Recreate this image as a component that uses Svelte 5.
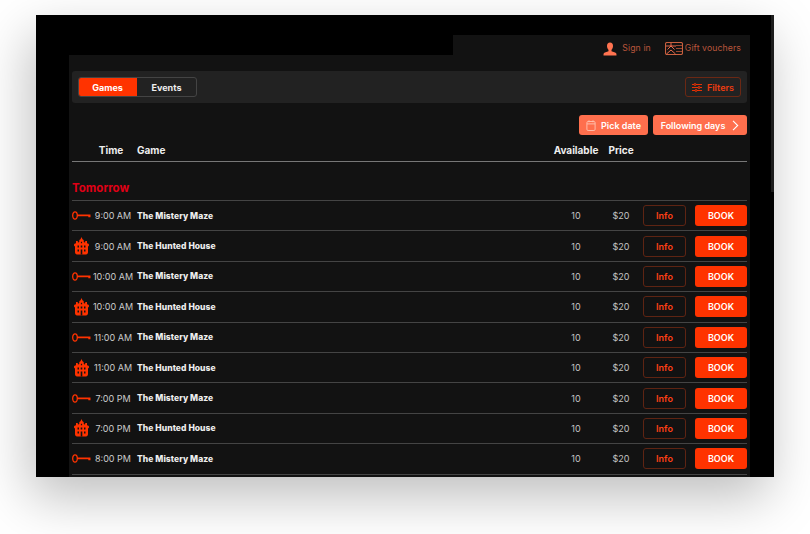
<script>
  const rows = [
    ['key', '9:00 AM', 'The Mistery Maze'],
    ['house', '9:00 AM', 'The Hunted House'],
    ['key', '10:00 AM', 'The Mistery Maze'],
    ['house', '10:00 AM', 'The Hunted House'],
    ['key', '11:00 AM', 'The Mistery Maze'],
    ['house', '11:00 AM', 'The Hunted House'],
    ['key', '7:00 PM', 'The Mistery Maze'],
    ['house', '7:00 PM', 'The Hunted House'],
    ['key', '8:00 PM', 'The Mistery Maze']
  ];
</script>

<div class="stage">
  <div class="window">
    <div class="panel">
      <div class="topline">
        <div class="account">
          <span class="link">
            <svg width="14" height="14" viewBox="0 0 14 14"><path fill="#ff7350" d="M7 0.500c2 0 3 1.500 3 3.500 0 1.700-.8 3.100-1.500 3.800v1.400c1.800.6 4.300 1.100 4.800 2.300.2.500.2 1.300.2 2H.5c0-.7 0-1.500.2-2 .5-1.200 3-1.700 4.800-2.300V7.800C4.800 7.100 4 5.700 4 4 4 2 5 .5 7 .5z"/></svg>
            Sign in
          </span>
          <span class="link gift">
            <svg width="18" height="13" viewBox="0 0 18 13" fill="none" stroke="#ff7350" stroke-width="0.9"><rect x="0.5" y="0.5" width="17" height="12" rx="1.500" stroke="#c9603f" stroke-width="1.100"/><path d="M11 3.500h6M11 6.500h6M11 9.500h6" stroke="#a84e33"/><path d="M1 4h10M6 1v3M6 4L2.500 7.500M6 4l3.500 3.500M1.500 12L6 8l4.500 4" /></svg>
            Gift vouchers
          </span>
        </div>
      </div>

      <div class="toolbar">
        <div class="toggle">
          <span class="tab on">Games</span>
          <span class="tab">Events</span>
        </div>
        <span class="filters">
          <svg width="10" height="9" viewBox="0 0 10 9" fill="none" stroke="#ff3300" stroke-width="0.9"><path d="M0 1.500h10M0 4.500h10M0 7.500h10"/><circle cx="3" cy="1.500" r="1" fill="#222"/><circle cx="7" cy="4.500" r="1" fill="#222"/><circle cx="4" cy="7.500" r="1" fill="#222"/></svg>
          Filters
        </span>
      </div>

      <div class="dates">
        <span class="datebtn pick">
          <svg width="10" height="11" viewBox="0 0 10 11" fill="none" stroke="#ffc4b2" stroke-width="0.9"><rect x="0.9" y="1.500" width="8.200" height="9" rx="1.200"/><path d="M.9 3.900h8.200M3 .3v2M7 .3v2"/></svg>
          Pick date
        </span>
        <span class="datebtn next">
          Following days
          <svg width="7" height="11" viewBox="0 0 7 11" fill="none" stroke="#fff" stroke-width="1.100"><path d="M1 .8l4.700 4.700L1 10.200"/></svg>
        </span>
      </div>

      <div class="grid head">
        <span></span>
        <span class="c-time">Time</span>
        <span class="c-game">Game</span>
        <span class="c-mid">Available</span>
        <span class="c-mid">Price</span>
      </div>

      <h2>Tomorrow</h2>

      {#each rows as r}
        <div class="grid row">
          <span class="icon">
            {#if r[0] === 'key'}
              <svg width="19" height="9" viewBox="0 0 19 9" fill="none"><ellipse cx="3" cy="4.500" rx="2.300" ry="3.700" stroke="#ff3300" stroke-width="1.300"/><path d="M5 3.500h13.500v2.800h-2.200V5.200H5z" fill="#ff3300"/></svg>
            {:else}
              <svg class="house" width="17" height="18" viewBox="0 0 17 18"><path fill="#ff3300" d="M8.500 0l1 2.200 1.200.8v1.700l1.300 1 .3-1.700h1.700v2.300c1.200.2 2 .8 2 1.700 0 .8-.5 1.300-1 1.500V15c0 1.300-.8 2.500-2 2.500H4c-1.200 0-2-1.200-2-2.500V9.500C1.500 9.300 1 8.800 1 8c0-.9.8-1.500 2-1.700V4h1.700L5 5.700l1.300-1V3l1.200-.8z"/><path fill="#121212" d="M4.500 8.500h1.500v2H4.500zM7.700 8.500h1.600v2H7.700zM11 8.500h1.500v2H11zM4.500 12.500h1.500v2H4.500zM7.700 12.500h1.600v5H7.700zM11 12.500h1.500v2H11zM7.900 4.800h1.200v1.500H7.900z"/></svg>
            {/if}
          </span>
          <span class="time">{r[1]}</span>
          <span class="title">{r[2]}</span>
          <span class="num">10</span>
          <span class="num">$20</span>
          <span class="info">Info</span>
          <span class="book">BOOK</span>
        </div>
      {/each}
      <div class="endline"></div>
    </div>
    <div class="scroll"></div>
  </div>
</div>

<style>
  :global(body) {
    margin: 0;
    background: #fff;
    overflow: hidden;
  }
  .stage {
    width: 810px;
    height: 534px;
    padding: 15px 36px 57px;
    box-sizing: border-box;
    font-family: Inter, "Liberation Sans", sans-serif;
    overflow: hidden;
  }
  .window {
    height: 462px;
    background: #000;
    box-shadow: -6px 20px 50px rgba(0, 0, 0, 0.26);
    overflow: hidden;
    position: relative;
    padding: 40px 0 0 33px;
    box-sizing: border-box;
  }
  .scroll {
    position: absolute;
    right: 0;
    top: 0;
    width: 3px;
    height: 177px;
    background: #1c1c1c;
  }
  .panel {
    width: 681px;
    background: #121212;
    padding: 16px 3px 0;
    box-sizing: border-box;
    height: 422px;
    position: relative;
  }
  .topline {
    position: absolute;
    top: -20px;
    right: 0;
    width: 297px;
    height: 20px;
    background: #121212;
  }
  .account {
    display: flex;
    justify-content: flex-end;
    align-items: center;
    height: 26px;
    padding-right: 9px;
    font-size: 8.700px;
    color: #b9553c;
    gap: 14px;
  }
  .link {
    display: flex;
    align-items: center;
    gap: 5px;
    letter-spacing: 0.1px;
  }
  .link svg {
    margin-top: 1px;
  }
  .gift {
    gap: 2px;
  }
  .toolbar {
    height: 32px;
    background: #222;
    border-radius: 3px;
    display: flex;
    justify-content: space-between;
    align-items: center;
    padding: 0 6px;
  }
  .toggle {
    display: flex;
    height: 20px;
    border: 1px solid #444;
    border-radius: 3px;
    box-sizing: border-box;
    overflow: hidden;
    width: 119px;
  }
  .tab {
    flex: 1;
    display: flex;
    align-items: center;
    justify-content: center;
    font-size: 9px;
    font-weight: 700;
    color: #eee;
  }
  .tab.on {
    flex: 0 0 59px;
    background: #ff3300;
    color: #fff;
    margin: -1px 0 -1px -1px;
  }
  .filters {
    display: flex;
    align-items: center;
    justify-content: center;
    gap: 5px;
    width: 56px;
    height: 20px;
    box-sizing: border-box;
    border: 1px solid #6b2814;
    border-radius: 3px;
    color: #ee3c10;
    font-size: 9px;
    font-weight: 600;
  }
  .dates {
    display: flex;
    justify-content: flex-end;
    gap: 5px;
    margin-top: 12px;
  }
  .datebtn {
    height: 20px;
    display: flex;
    align-items: center;
    justify-content: center;
    background: #ff6f4d;
    color: #fff;
    border-radius: 3px;
    font-size: 9px;
    font-weight: 600;
    gap: 5px;
    box-sizing: border-box;
  }
  .pick {
    width: 69px;
  }
  .next {
    width: 94px;
    gap: 7px;
  }
  .grid {
    display: grid;
    grid-template-columns: 20px 42px 1fr 46px 44px 43px 61px;
    align-items: center;
  }
  .head {
    height: 22px;
    padding-top: 4px;
    border-bottom: 1px solid #777;
    font-size: 10px;
    font-weight: 700;
    color: #eee;
    box-sizing: content-box;
  }
  .c-time {
    text-align: center;
    margin-left: -4px;
  }
  .c-game {
    padding-left: 3px;
  }
  .c-mid {
    text-align: center;
    white-space: nowrap;
  }
  h2 {
    margin: 0;
    height: 38px;
    line-height: 52px;
    font-size: 11.500px;
    font-weight: 700;
    color: #e00016;
    overflow: hidden;
  }
  .row {
    height: 30.400px;
    box-sizing: border-box;
    border-top: 1px solid #444;
    font-size: 9px;
  }
  .endline {
    border-top: 1px solid #444;
  }
  .icon {
    display: flex;
    align-items: center;
  }
  .house {
    margin-left: 1px;
  }
  .time {
    text-align: center;
    color: #ccc;
    white-space: nowrap;
  }
  .title {
    padding-left: 3px;
    font-weight: 800;
    color: #eee;
    font-size: 8.500px;
    letter-spacing: 0.05px;
  }
  .num {
    text-align: center;
    color: #c4c4c4;
  }
  .info {
    height: 21px;
    display: flex;
    align-items: center;
    justify-content: center;
    box-sizing: border-box;
    border: 1px solid #5e2413;
    border-radius: 3px;
    color: #ff4015;
    font-weight: 600;
  }
  .book {
    height: 21px;
    margin-left: 9px;
    width: 52px;
    display: flex;
    align-items: center;
    justify-content: center;
    background: #ff3300;
    color: #fff;
    border-radius: 3px;
    font-weight: 600;
  }
</style>
